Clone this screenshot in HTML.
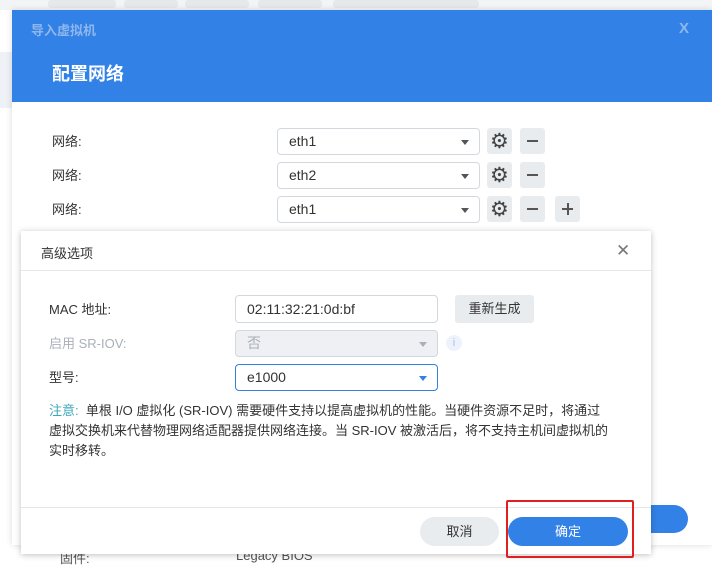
<html><head><style>
body{margin:0;width:712px;height:561px;overflow:hidden;background:#fff;font-family:"Liberation Sans","Noto Sans CJK SC",sans-serif;position:relative}
.a{position:absolute}
.sel{position:absolute;border:1px solid #d3d8df;border-radius:4px;background:#fff;box-sizing:border-box;font-size:14px;color:#333;padding-left:11px;line-height:25px}
.sel .c{position:absolute;right:10px;top:11px;width:0;height:0;border-left:4px solid transparent;border-right:4px solid transparent;border-top:5px solid #555}
.ib{position:absolute;width:25px;height:26px;background:#e9ecef;border-radius:3px}
.lab{position:absolute;font-size:13px;color:#333}
</style></head><body>
<div class="a" style="left:0;top:0;width:712px;height:10px;background:#f3f4f6"></div>
<div class="a" style="left:48px;top:0;width:68px;height:8px;background:#e6e8eb;border-radius:3px"></div>
<div class="a" style="left:124px;top:0;width:54px;height:8px;background:#e6e8eb;border-radius:3px"></div>
<div class="a" style="left:185px;top:0;width:64px;height:8px;background:#e6e8eb;border-radius:3px"></div>
<div class="a" style="left:258px;top:0;width:64px;height:8px;background:#e6e8eb;border-radius:3px"></div>
<div class="a" style="left:333px;top:0;width:146px;height:8px;background:#e6e8eb;border-radius:3px"></div>
<div class="a" style="left:0;top:52px;width:12px;height:56px;background:#eef1f5"></div>
<div class="a" style="left:12px;top:10px;width:700px;height:535px;background:#fff;box-shadow:0 0 6px rgba(0,0,0,.15)"></div>
<div class="a" style="left:12px;top:10px;width:700px;height:92px;background:#3281e6"></div>
<div class="a" style="left:31px;top:20px;font-size:13px;color:#8fb7ee;font-weight:bold">导入虚拟机</div>
<div class="a" style="left:679px;top:20px;font-size:15px;color:#8fb7ee;font-weight:bold">X</div>
<div class="a" style="left:52px;top:60px;font-size:18px;color:#fff;font-weight:bold">配置网络</div>
<div class="lab" style="left:52px;top:131px">网络:</div>
<div class="lab" style="left:52px;top:165px">网络:</div>
<div class="lab" style="left:52px;top:199px">网络:</div>
<div class="sel" style="left:277px;top:128px;width:203px;height:27px">eth1<span class="c"></span></div>
<div class="sel" style="left:277px;top:162px;width:203px;height:27px">eth2<span class="c"></span></div>
<div class="sel" style="left:277px;top:196px;width:203px;height:27px">eth1<span class="c"></span></div>
<div class="ib" style="left:487px;top:128px"><span class="a" style="left:3px;top:0;font-size:21px;color:#444;line-height:26px;font-family:'DejaVu Sans'">⚙</span></div>
<div class="ib" style="left:520px;top:128px"><span class="a" style="left:7px;top:12px;width:11px;height:2px;background:#555"></span></div>
<div class="ib" style="left:487px;top:162px"><span class="a" style="left:3px;top:0;font-size:21px;color:#444;line-height:26px;font-family:'DejaVu Sans'">⚙</span></div>
<div class="ib" style="left:520px;top:162px"><span class="a" style="left:7px;top:12px;width:11px;height:2px;background:#555"></span></div>
<div class="ib" style="left:487px;top:196px"><span class="a" style="left:3px;top:0;font-size:21px;color:#444;line-height:26px;font-family:'DejaVu Sans'">⚙</span></div>
<div class="ib" style="left:520px;top:196px"><span class="a" style="left:7px;top:12px;width:11px;height:2px;background:#555"></span></div>
<div class="ib" style="left:555px;top:196px"><span class="a" style="left:7px;top:12px;width:11px;height:2px;background:#555"></span><span class="a" style="left:11.5px;top:7px;width:2px;height:12px;background:#555"></span></div>
<div class="a" style="left:650px;top:505px;width:38px;height:28px;background:#3281e6;border-radius:0 14px 14px 0"></div>
<div class="a" style="left:60px;top:548px;font-size:13px;color:#555">固件:</div>
<div class="a" style="left:236px;top:548px;font-size:13px;color:#555">Legacy BIOS</div>
<div class="a" style="left:21px;top:231px;width:630px;height:323px;background:#fff;box-shadow:0 1px 6px rgba(0,0,0,.25)"></div>
<div class="a" style="left:41px;top:243px;font-size:13px;color:#333">高级选项</div>
<div class="a" style="left:616px;top:241px;font-size:17px;color:#777">✕</div>
<div class="a" style="left:21px;top:270px;width:630px;height:1px;background:#e3e6ea"></div>
<div class="lab" style="left:49px;top:299px">MAC 地址:</div>
<div class="lab" style="left:49px;top:333px;color:#aab0b8">启用 SR-IOV:</div>
<div class="lab" style="left:49px;top:367px">型号:</div>
<div class="sel" style="left:235px;top:295px;width:203px;height:28px;line-height:27px">02:11:32:21:0d:bf</div>
<div class="sel" style="left:235px;top:330px;width:203px;height:27px;background:#eef0f3;color:#aab0b8">否<span class="c" style="border-top-color:#aab0b8"></span></div>
<div class="sel" style="left:235px;top:364px;width:203px;height:27px;border-color:#3281e6">e1000<span class="c" style="border-top-color:#3281e6"></span></div>
<div class="a" style="left:455px;top:295px;width:79px;height:28px;background:#e9ecef;border-radius:3px;font-size:13px;color:#333;text-align:center;line-height:28px">重新生成</div>
<div class="a" style="left:446px;top:335px;width:16px;height:16px;border-radius:50%;background:#eef3fb;color:#9dc0ee;font-size:11px;text-align:center;line-height:16px">i</div>
<div class="a" style="left:49px;top:401px;width:600px;font-size:13px;line-height:20px;color:#333;white-space:nowrap"><span style="color:#3ba8b8">注意:</span>&nbsp; 单根 I/O 虚拟化 (SR-IOV) 需要硬件支持以提高虚拟机的性能。当硬件资源不足时，将通过<br>虚拟交换机来代替物理网络适配器提供网络连接。当 SR-IOV 被激活后，将不支持主机间虚拟机的<br>实时移转。</div>
<div class="a" style="left:21px;top:507px;width:630px;height:1px;background:#e3e6ea"></div>
<div class="a" style="left:420px;top:517px;width:79px;height:29px;background:#e9ecef;border-radius:15px;font-size:13px;color:#333;text-align:center;line-height:29px">取消</div>
<div class="a" style="left:508px;top:517px;width:120px;height:29px;background:#3281e6;border-radius:15px;font-size:13px;color:#fff;text-align:center;line-height:29px">确定</div>
<div class="a" style="left:506px;top:500px;width:124px;height:54px;border:2px solid #e02020;border-radius:2px"></div>
</body></html>
